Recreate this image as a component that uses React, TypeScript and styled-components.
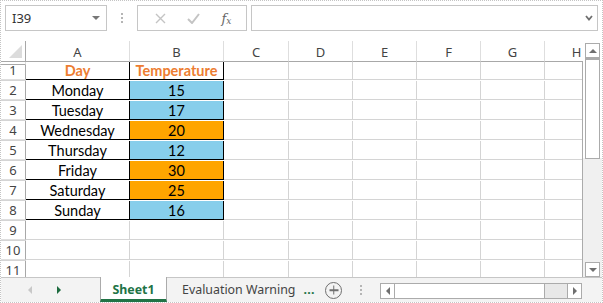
import React from 'react';
import styled, {createGlobalStyle} from "styled-components";

const GlobalStyle = createGlobalStyle`
html, body {margin: 0; padding: 0; background: #fff;}
* {box-sizing: border-box;}
`;

type Row = { day: string; temp: number };

const rows: Row[] = [
    {day: 'Monday', temp: 15},
    {day: 'Tuesday', temp: 17},
    {day: 'Wednesday', temp: 20},
    {day: 'Thursday', temp: 12},
    {day: 'Friday', temp: 30},
    {day: 'Saturday', temp: 25},
    {day: 'Sunday', temp: 16},
];

const letters = ['A', 'B', 'C', 'D', 'E', 'F', 'G', 'H'];
const colTemplate = '25px 104px 94px 65px 64px 64px 64px 64px 64px';

const Frame = styled.div`
width: 603px;
height: 303px;
border: 1px dotted #c4c4c4;
background: #fff;
display: flex;
flex-direction: column;
overflow: hidden;
font-family: "Noto Sans", "Open Sans", sans-serif;`;

const FormulaBar = styled.div`
height: 40px;
flex: none;
display: flex;
align-items: flex-start;
padding: 4px 4px 0 4px;
gap: 4px;`;

const Box = styled.div<{ w?: number }>`
height: 26px;
width: ${(p) => p.w ? p.w + 'px' : 'auto'};
flex: ${(p) => p.w ? 'none' : '1'};
border: 1px solid #c6c6c6;
display: flex;
align-items: center;
position: relative;`;

const NameText = styled.span`
font-size: 13px;
color: #333;
padding-left: 6px;
flex: 1;`;

const DownTri = styled.span`
width: 0;
height: 0;
border-left: 4px solid transparent;
border-right: 4px solid transparent;
border-top: 4px solid #777;
margin-right: 6px;`;

const VDots = styled.div`
width: 22px;
height: 26px;
display: flex;
flex-direction: column;
align-items: center;
justify-content: center;
gap: 2px;
flex: none;
span {
  width: 2px;
  height: 2px;
  background: #b5b5b5;
}`;

const FxButtons = styled.div`
flex: 1;
display: flex;
align-items: center;
justify-content: space-around;
padding: 0 4px 0 6px;`;

const Fx = styled.span`
font-family: "DejaVu Serif", "Liberation Serif", serif;
font-style: italic;
font-size: 13px;
color: #666;
sub {
  font-size: 9px;
  vertical-align: baseline;
  position: relative;
  top: 1px;
}`;

const Chevron = styled.svg`
position: absolute;
right: 4px;
top: 9px;`;

const SheetArea = styled.div`
height: 236px;
flex: none;
display: flex;`;

const GridWrap = styled.div`
width: 582px;
flex: none;
overflow: hidden;
display: flex;
flex-direction: column;`;

const GridRow = styled.div`
display: grid;
grid-template-columns: ${colTemplate};
height: 20px;
flex: none;`;

const Body = styled.div`
flex: 1;
overflow: hidden;
border-right: 1px solid #ababab;`;

const HeadCell = styled.div<{ corner?: boolean }>`
border-right: 1px solid #dedede;
border-bottom: 1px solid #a8a8a8;
font-size: 13px;
color: #444;
display: flex;
align-items: center;
justify-content: center;
padding-top: 2px;
position: relative;
${(p) => p.corner && 'border-right-color: #a8a8a8;'}`;

const CornerTri = styled.span`
position: absolute;
right: 3px;
bottom: 3px;
width: 0;
height: 0;
border-left: 13px solid transparent;
border-bottom: 13px solid #dcdcdc;`;

const RowHead = styled.div`
border-right: 1px solid #a8a8a8;
border-bottom: 1px solid #dedede;
font-size: 13px;
color: #444;
display: flex;
align-items: center;
justify-content: center;`;

type CellProps = {
    fill?: string;
    boxed?: boolean;
    head?: boolean;
};

const Cell = styled.div<CellProps>`
border-right: 1px solid ${(p) => p.boxed ? '#000' : '#d4d4d4'};
border-bottom: 1px solid ${(p) => p.boxed ? '#000' : '#d4d4d4'};
background: ${(p) => p.fill || '#fff'};
font-family: Lato, "Open Sans", sans-serif;
font-size: 14.5px;
font-weight: ${(p) => p.head ? 700 : 400};
color: ${(p) => p.head ? '#ED7D31' : '#000'};
display: flex;
align-items: center;
justify-content: center;
white-space: nowrap;
overflow: hidden;`;

const VScroll = styled.div`
width: 19px;
flex: none;
display: flex;
flex-direction: column;
align-items: center;
padding-top: 2px;
background: linear-gradient(#fff 0 117px, #f0f0f0 117px);`;

const ScrollBtn = styled.div`
width: 15px;
height: 15px;
flex: none;
border: 1px solid #ababab;
background: #fff;
display: flex;
align-items: center;
justify-content: center;`;

const VThumb = styled.div`
width: 15px;
height: 101px;
border: 1px solid #ababab;
border-top-width: 2px;
background: #fff;
flex: none;`;

const Fill = styled.div`
flex: 1;`;

const Tri = styled.span<{ dir: 'up' | 'down' | 'left' | 'right'; color?: string; size?: number }>`
width: 0;
height: 0;
${(p) => {
    const s = p.size || 4;
    const c = p.color || '#777';
    if (p.dir === 'up') return `border-left:${s}px solid transparent;border-right:${s}px solid transparent;border-bottom:${s}px solid ${c};`;
    if (p.dir === 'down') return `border-left:${s}px solid transparent;border-right:${s}px solid transparent;border-top:${s}px solid ${c};`;
    if (p.dir === 'left') return `border-top:${s}px solid transparent;border-bottom:${s}px solid transparent;border-right:${s}px solid ${c};`;
    return `border-top:${s}px solid transparent;border-bottom:${s}px solid transparent;border-left:${s}px solid ${c};`;
}}`;

const TabBar = styled.div`
height: 25px;
flex: none;
background: #f3f3f3;
border-top: 1px solid #c6c6c6;
display: flex;
align-items: stretch;
font-size: 12.4px;
white-space: nowrap;`;

const NavArrows = styled.div`
width: 99px;
flex: none;
display: flex;
align-items: center;
padding-left: 27px;
gap: 25px;`;

const Tab = styled.div<{ active?: boolean }>`
display: flex;
align-items: center;
justify-content: center;
flex: none;
margin-top: -1px;
${(p) => p.active ? `
  width: 67px;
  background: #fff;
  border-left: 1px solid #ababab;
  border-right: 1px solid #ababab;
  border-bottom: 3px solid #217346;
  color: #217346;
  font-weight: 700;
  padding-top: 2px;
` : `
  width: 158px;
  justify-content: flex-start;
  padding-left: 15px;
  color: #444;
`}`;

const More = styled.span`
color: #217346;
font-weight: 700;
margin-left: 8px;
letter-spacing: 0.3px;`;

const AddBtn = styled.div`
width: 17px;
height: 17px;
flex: none;
border: 1.5px solid #6f6f6f;
border-radius: 50%;
align-self: center;
position: relative;
&::before, &::after {
  content: '';
  position: absolute;
  background: #6f6f6f;
  left: 50%;
  top: 50%;
  transform: translate(-50%, -50%);
}
&::before {width: 9px; height: 1.5px;}
&::after {width: 1.5px; height: 9px;}`;

const TabDots = styled(VDots)`
width: 38px;
height: auto;
align-self: stretch;`;

const HScroll = styled.div`
width: 202px;
height: 16px;
flex: none;
align-self: center;
margin-top: 1px;
border: 1px solid #ababab;
display: flex;
background: #e8e8e8;`;

const HBtn = styled.div<{ side: 'l' | 'r' }>`
width: 14px;
flex: none;
background: #fff;
display: flex;
align-items: center;
justify-content: center;
${(p) => p.side === 'l' ? 'border-right: 1px solid #ababab;' : 'border-left: 1px solid #ababab; margin-left: auto;'}`;

const HThumb = styled.div`
width: 150px;
background: #fff;
border-right: 1px solid #ababab;`;

const App = () => {
    const bodyRows = [];
    for (let r = 1; r <= 11; r++) {
        const data = r === 1 ? null : rows[r - 2];
        bodyRows.push(
            <GridRow key={r}>
                <RowHead>{r}</RowHead>
                {r === 1 && <Cell boxed head>Day</Cell>}
                {r === 1 && <Cell boxed head>Temperature</Cell>}
                {data && <Cell boxed>{data.day}</Cell>}
                {data && <Cell boxed fill={data.temp >= 20 ? '#FFA500' : '#87CEEB'}>{data.temp}</Cell>}
                {r > 8 && <Cell/>}
                {r > 8 && <Cell/>}
                {letters.slice(2).map((l) => <Cell key={l}/>)}
                <Cell/>
            </GridRow>
        );
    }

    return (
        <>
            <GlobalStyle/>
            <Frame>
                <FormulaBar>
                    <Box w={102}>
                        <NameText>I39</NameText>
                        <DownTri/>
                    </Box>
                    <VDots><span/><span/><span/></VDots>
                    <Box w={110}>
                        <FxButtons>
                            <svg width="11" height="11" viewBox="0 0 11 11">
                                <path d="M1 1 L10 10 M10 1 L1 10" stroke="#c4c4c4" strokeWidth="1.4"/>
                            </svg>
                            <svg width="13" height="11" viewBox="0 0 13 11">
                                <path d="M1 6 L5 10 L12 1" stroke="#c4c4c4" strokeWidth="2" fill="none"/>
                            </svg>
                            <Fx>f<sub>x</sub></Fx>
                        </FxButtons>
                    </Box>
                    <Box>
                        <Chevron width="8" height="6" viewBox="0 0 8 6">
                            <path d="M1 1 L4 4.5 L7 1" stroke="#6f6f6f" strokeWidth="1.8" fill="none"/>
                        </Chevron>
                    </Box>
                </FormulaBar>
                <SheetArea>
                    <GridWrap>
                        <GridRow>
                            <HeadCell corner><CornerTri/></HeadCell>
                            {letters.map((l) => <HeadCell key={l}>{l}</HeadCell>)}
                            <HeadCell/>
                        </GridRow>
                        <Body>{bodyRows}</Body>
                    </GridWrap>
                    <VScroll>
                        <ScrollBtn><Tri dir="up" color="#6f6f6f"/></ScrollBtn>
                        <VThumb/>
                        <Fill/>
                        <ScrollBtn><Tri dir="down" color="#6f6f6f"/></ScrollBtn>
                    </VScroll>
                </SheetArea>
                <TabBar>
                    <NavArrows>
                        <Tri dir="left" color="#c8c8c8"/>
                        <Tri dir="right" color="#1d6b3f"/>
                    </NavArrows>
                    <Tab active>Sheet1</Tab>
                    <Tab>Evaluation Warning<More>...</More></Tab>
                    <AddBtn/>
                    <TabDots><span/><span/><span/></TabDots>
                    <HScroll>
                        <HBtn side="l"><Tri dir="left" color="#6f6f6f"/></HBtn>
                        <HThumb/>
                        <HBtn side="r"><Tri dir="right" color="#6f6f6f"/></HBtn>
                    </HScroll>
                </TabBar>
            </Frame>
        </>
    );
};

export default App;
